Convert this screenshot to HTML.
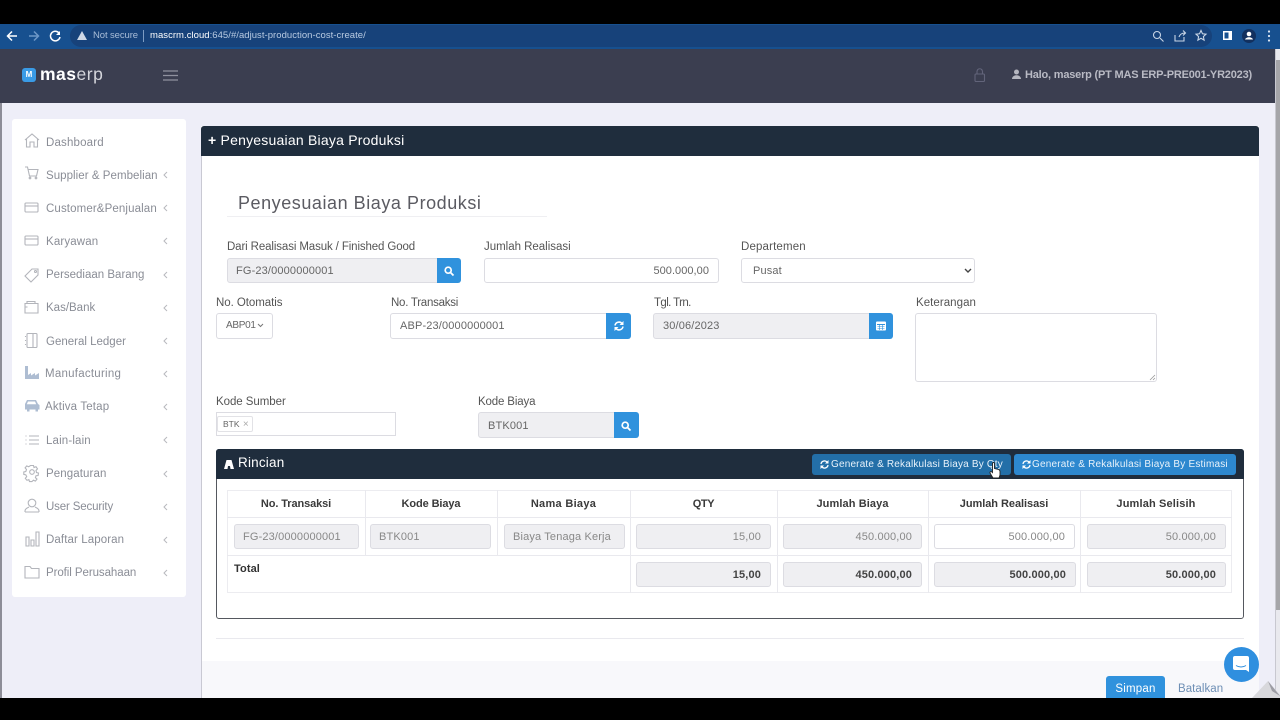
<!DOCTYPE html>
<html><head><meta charset="utf-8"><title>Penyesuaian Biaya Produksi</title>
<style>
*{box-sizing:border-box}
html,body{margin:0;padding:0;width:1280px;height:720px;overflow:hidden;background:#000;font-family:"Liberation Sans",sans-serif;color:#555}
div,span,svg{position:absolute}
.t{white-space:nowrap;font-size:11.5px;line-height:14px;letter-spacing:.1px;color:#555}
.nav{white-space:nowrap;font-size:11.5px;line-height:14px;letter-spacing:.12px;color:#8a8d96;left:46px}
.f{border:1px solid #dcdce2;border-radius:3px;background:#fff;font-size:11px;line-height:14px;letter-spacing:.15px;color:#666;white-space:nowrap}
.d{background:#efeff2}
.f span{top:50%;margin-top:-7px}
.b{background:#3092dd;border-radius:0 3px 3px 0}
.th{font-weight:bold;font-size:11px;line-height:14px;letter-spacing:.05px;color:#3a3a3a;text-align:center;top:497px;white-space:nowrap}
.ln{background:#e9e9ee}
svg{overflow:visible}
.ic{fill:none;stroke:#b3b5bb;stroke-width:1.1}
</style></head><body>

<!-- browser bar -->
<div style="left:0;top:24px;width:1280px;height:25px;background:#17508f"></div>
<div style="left:70px;top:25px;width:1142px;height:22px;background:#17427a;border-radius:11px"></div>
<svg style="left:0;top:24px" width="90" height="25"><path d="M17 12H8M12 7.500L7.500 12l4.500 4.500" fill="none" stroke="#fff" stroke-width="1.500"/><path d="M29 12h9M34 7.500l4.500 4.500-4.500 4.500" fill="none" stroke="#6d97c7" stroke-width="1.500"/><path d="M59 9a4.800 4.800 0 1 0 1 4" fill="none" stroke="#fff" stroke-width="1.500"/><path d="M60 7v4h-4z" fill="#fff"/><path d="M82 7l5 9h-10z" fill="#cfd8e6"/></svg>
<div class="t" style="left:93px;top:29px;font-size:9.500px;color:#a9bdd8;letter-spacing:-.1px">Not secure</div>
<div style="left:143px;top:30px;width:1px;height:12px;background:#7d9cc3"></div>
<div class="t" style="left:150px;top:29px;font-size:9.500px;color:#b9cbe2;letter-spacing:.04px"><b style="color:#fff;font-weight:normal">mascrm.cloud</b>:645/#/adjust-production-cost-create/</div>
<svg style="left:1150px;top:28px" width="125" height="16"><g fill="none" stroke="#c8d5e6" stroke-width="1.100"><circle cx="7" cy="7" r="3.500"/><path d="M10 10l3.500 3.500"/><path d="M25 7v6h9V9M29 9c1-3 3-4 6-4M33 2.500l2.500 2.500-2.500 2.500"/><path d="M51 2.500l1.500 3.300 3.500.4-2.600 2.400.7 3.500-3.100-1.800-3.100 1.800.7-3.500-2.600-2.400 3.500-.4z"/></g><path d="M73 3h9v9h-9z" fill="#fff"/><path d="M74.500 4.500h4v6h-4z" fill="#17508f"/><circle cx="99" cy="8" r="7" fill="#12305e"/><circle cx="99" cy="6" r="2.300" fill="#fff"/><path d="M95 11.500c1-3 7-3 8 0z" fill="#fff"/><circle cx="119" cy="3.500" r="1.100" fill="#dfe8f4"/><circle cx="119" cy="8" r="1.100" fill="#dfe8f4"/><circle cx="119" cy="12.500" r="1.100" fill="#dfe8f4"/></svg>

<!-- page -->
<div style="left:0;top:49px;width:1275px;height:649px;background:#eeeef8;overflow:hidden"></div>
<div style="left:0;top:103px;width:2px;height:595px;background:#8d8d98"></div>
<div style="left:0;top:49px;width:1275px;height:54px;background:#3b3e50"></div>

<!-- logo -->
<div style="left:22px;top:68px;width:14px;height:14px;background:#3a9be6;border-radius:3px;color:#fff;font-size:8px;line-height:14px;text-align:center;font-weight:bold">M</div>
<div class="t" style="left:40px;top:64px;font-size:17.500px;line-height:21px;color:#fff;letter-spacing:.5px"><b>mas</b><span style="position:static;color:#d5d6dc">erp</span></div>
<svg style="left:163px;top:70px" width="16" height="11"><path d="M0 1h15M0 5.500h15M0 10h15" stroke="#8f919e" stroke-width="1.300"/></svg>
<svg style="left:974px;top:68px" width="12" height="14"><rect x="1" y="6" width="9.500" height="7.500" rx="1" fill="none" stroke="#62647a" stroke-width="1.100"/><path d="M3 6V3.500a2.700 2.700 0 0 1 5.500 0V6" fill="none" stroke="#62647a" stroke-width="1.100"/></svg>
<svg style="left:1012px;top:69px" width="10" height="11"><circle cx="4.500" cy="3" r="2.500" fill="#b5b6c0"/><path d="M0 10c0-5 9-5 9 0z" fill="#b5b6c0"/></svg>
<div class="t" style="left:1025px;top:68px;font-weight:bold;font-size:11px;color:#b9bac4;letter-spacing:-.2px">Halo, maserp (PT MAS ERP-PRE001-YR2023)</div>

<!-- sidebar -->
<div style="left:12px;top:119px;width:174px;height:478px;background:#fff;border-radius:3px"></div>
<div class="nav" style="top:136px;letter-spacing:.17px">Dashboard</div>
<div class="nav" style="top:169px;letter-spacing:.05px">Supplier &amp; Pembelian</div>
<div class="nav" style="top:202px;letter-spacing:.12px">Customer&amp;Penjualan</div>
<div class="nav" style="top:235px;letter-spacing:.15px">Karyawan</div>
<div class="nav" style="top:268px;letter-spacing:0">Persediaan Barang</div>
<div class="nav" style="top:301px;letter-spacing:0">Kas/Bank</div>
<div class="nav" style="top:335px;letter-spacing:0">General Ledger</div>
<div class="nav" style="top:367px;left:45px;letter-spacing:.25px">Manufacturing</div>
<div class="nav" style="top:400px;left:45px;letter-spacing:.15px">Aktiva Tetap</div>
<div class="nav" style="top:434px;letter-spacing:.15px">Lain-lain</div>
<div class="nav" style="top:467px;letter-spacing:.1px">Pengaturan</div>
<div class="nav" style="top:500px;letter-spacing:-.15px">User Security</div>
<div class="nav" style="top:533px;letter-spacing:.1px">Daftar Laporan</div>
<div class="nav" style="top:566px;letter-spacing:-.07px">Profil Perusahaan</div>
<svg style="left:162px;top:135px" width="8" height="450"><g fill="none" stroke="#b8b9be" stroke-width="1"><path d="M5 37l-3 3 3 3M5 70l-3 3 3 3M5 103l-3 3 3 3M5 137l-3 3 3 3M5 170l-3 3 3 3M5 203l-3 3 3 3M5 236l-3 3 3 3M5 269l-3 3 3 3M5 302l-3 3 3 3M5 336l-3 3 3 3M5 369l-3 3 3 3M5 402l-3 3 3 3M5 435l-3 3 3 3"/></g></svg>
<svg style="left:24px;top:132px" width="16" height="450"><g class="ic">
<path d="M1 8l7-6 7 6M2.500 7v8h3.500v-5h4v5h3.500V7"/>
<path d="M1 35h2.500l2 9h7l1.500-6.500H4"/><circle cx="6" cy="46" r=".8"/><circle cx="12" cy="46" r=".8"/>
<rect x="1" y="71" width="13" height="9" rx="1"/><path d="M1 74h13"/>
<rect x="1" y="104" width="13" height="9" rx="1"/><path d="M1 107h13"/>
<path d="M1 144l7-7h6v6l-7 7z"/><circle cx="11.500" cy="139.500" r="1"/>
<path d="M1 171.500h13v9.500H1zM3 171.500v-2h8v2M1 175h2.500"/>
<rect x="3" y="201.500" width="10" height="14" rx="1"/><path d="M9 201.500v14M1.500 204v1M1.500 208v1M1.500 212v1"/>
<path d="M5 304h10M5 308h10M5 312h10M1.500 304h1M1.500 308h1M1.500 312h1"/>
<path d="M6.500 333l3 0 .5 2 2-.8 1.500 2.100-1.500 1.700.5 2 2 .5-.4 2.500-2.100.2-.6 2 1.600 1.400-1.600 2-2-.9-1.500 1.400h-2.400l-.6-1.900-2 .6-1.600-2 1.400-1.600-.9-1.900-2-.4v-2.500l2-.4.7-2-1.400-1.600 1.600-2 2 .8z" transform="translate(0,.5) scale(1,1)"/><circle cx="8" cy="340" r="2.300"/>
<circle cx="8" cy="371" r="3.800"/><path d="M1 380v-1c0-2.500 3-3.500 4-4M15 380v-1c0-2.500-3-3.500-4-4M1 380h14"/>
<path d="M2 405h3v9H2zM7 408h3v6H7zM12 400h3v14h-3z"/>
<path d="M1 434.500h5l1.500 2H15v9.500H1z"/></g>
<path d="M1 234v13h14v-6l-4 2.500v-2.500l-4 2.500v-2.500l-3 2v-9z" fill="#aebdd2"/>
<path d="M3 268h9l2 4 1.500 1v4.500h-1.500v2h-2.500v-2h-6v2H3v-2H1v-4.500l0-1zM4 269.500l-1.200 2.800h9.400L11 269.500z" fill-rule="evenodd" fill="#aebdd2"/></svg>

<!-- main panel -->
<div style="left:201px;top:126px;width:1058px;height:572px;background:#fff"></div>
<div style="left:201px;top:126px;width:1058px;height:30px;background:#1f2d3d;border-radius:3px 3px 0 0"></div>
<div class="t" style="left:208px;top:132px;font-size:14px;line-height:17px;color:#fff;letter-spacing:.22px"><b>+</b> Penyesuaian Biaya Produksi</div>
<div style="left:201px;top:156px;width:1px;height:542px;background:#c9c9d3"></div>
<div class="t" style="left:238px;top:192px;font-size:18px;line-height:22px;color:#5b5b62;letter-spacing:.55px">Penyesuaian Biaya Produksi</div>
<div class="ln" style="left:227px;top:216px;width:320px;height:1px;background:#efeff2"></div>

<!-- row 1 -->
<div class="t" style="left:227px;top:240px;letter-spacing:-.12px">Dari Realisasi Masuk / Finished Good</div>
<div class="f d" style="left:227px;top:258px;width:211px;height:25px;border-radius:3px 0 0 3px"><span style="left:8px">FG-23/0000000001</span></div>
<div class="b" style="left:437px;top:258px;width:24px;height:25px"></div>
<svg style="left:444px;top:266px" width="10" height="10"><circle cx="4.200" cy="4.200" r="3" fill="none" stroke="#fff" stroke-width="1.700"/><path d="M6.500 6.500l3 3" stroke="#fff" stroke-width="1.800"/></svg>
<div class="t" style="left:484px;top:240px;letter-spacing:-.02px">Jumlah Realisasi</div>
<div class="f" style="left:484px;top:258px;width:235px;height:25px"><span style="right:9px;letter-spacing:.05px">500.000,00</span></div>
<div class="t" style="left:741px;top:240px;letter-spacing:.15px">Departemen</div>
<div class="f" style="left:741px;top:258px;width:234px;height:25px"><span style="left:11px">Pusat</span></div>
<svg style="left:964px;top:268px" width="8" height="6"><path d="M1 1l3 3 3-3" fill="none" stroke="#444" stroke-width="1.400"/></svg>

<!-- row 2 -->
<div class="t" style="left:216px;top:296px;letter-spacing:-.05px">No. Otomatis</div>
<div class="f" style="left:216px;top:313px;width:57px;height:26px"><span style="left:9px;font-size:10px;letter-spacing:-.3px">ABP01</span></div>
<svg style="left:257px;top:323px" width="7" height="5"><path d="M1 1l2.500 2.500L6 1" fill="none" stroke="#777"/></svg>
<div class="t" style="left:391px;top:296px;letter-spacing:-.25px">No. Transaksi</div>
<div class="f" style="left:390px;top:313px;width:217px;height:26px;border-radius:3px 0 0 3px"><span style="left:9px">ABP-23/0000000001</span></div>
<div class="b" style="left:606px;top:313px;width:25px;height:26px"></div>
<svg style="left:614px;top:321px" width="10" height="10"><path d="M1 4.500a4 4 0 0 1 7-2M9 5.500a4 4 0 0 1-7 2" fill="none" stroke="#fff" stroke-width="1.500"/><path d="M9.500 0v4h-4zM.5 10V6h4z" fill="#fff"/></svg>
<div class="t" style="left:654px;top:296px;letter-spacing:-.6px">Tgl. Trn.</div>
<div class="f d" style="left:653px;top:313px;width:217px;height:26px;border-radius:3px 0 0 3px"><span style="left:9px">30/06/2023</span></div>
<div class="b" style="left:869px;top:313px;width:24px;height:26px"></div>
<svg style="left:876px;top:320px" width="10" height="11"><rect x="0" y="1.500" width="10" height="9" rx="1" fill="#fff"/><path d="M1 4.500h8" stroke="#3092dd"/><path d="M1.500 6.500h7M1.500 8.500h7M3.500 5v5M6.500 5v5" stroke="#3092dd" stroke-width=".6"/></svg>
<div class="t" style="left:916px;top:296px;letter-spacing:.05px">Keterangan</div>
<div class="f" style="left:915px;top:313px;width:242px;height:69px"></div>
<svg style="left:1149px;top:374px" width="7" height="7"><path d="M1 6l5-5M4 6l2-2" stroke="#999" stroke-width=".8"/></svg>

<!-- row 3 -->
<div class="t" style="left:216px;top:395px;letter-spacing:-.05px">Kode Sumber</div>
<div style="left:216px;top:412px;width:180px;height:24px;border:1px solid #dcdce2"></div>
<div style="left:217px;top:416px;width:36px;height:16px;border:1px solid #e2e2e6;border-radius:2px;font-size:8.500px;line-height:14px;color:#666;padding-left:5px;white-space:nowrap">BTK <span style="position:static;color:#aaa;font-size:10px;margin-left:1px">×</span></div>
<div class="t" style="left:478px;top:395px;letter-spacing:-.15px">Kode Biaya</div>
<div class="f d" style="left:478px;top:412px;width:137px;height:26px;border-radius:3px 0 0 3px"><span style="left:9px;margin-top:-6px">BTK001</span></div>
<div class="b" style="left:614px;top:412px;width:25px;height:26px"></div>
<svg style="left:621px;top:421px" width="10" height="10"><circle cx="4.200" cy="4.200" r="3" fill="none" stroke="#fff" stroke-width="1.700"/><path d="M6.500 6.500l3 3" stroke="#fff" stroke-width="1.800"/></svg>

<!-- rincian -->
<div style="left:216px;top:449px;width:1028px;height:170px;border:1px solid #55585f;border-radius:3px"></div>
<div style="left:216px;top:449px;width:1028px;height:30px;background:#1f2d3d;border-radius:3px 3px 0 0"></div>
<svg style="left:224px;top:460px" width="10" height="9"><path d="M2.500 0h5L10 9H6.500L6 6H4l-.5 3H0z" fill="#fff"/></svg>
<div class="t" style="left:238px;top:455px;font-size:13.500px;line-height:16px;color:#fff;letter-spacing:.2px">Rincian</div>
<div style="left:812px;top:454px;width:199px;height:21px;background:#236fa8;border-radius:3px"></div>
<div style="left:1014px;top:454px;width:222px;height:21px;background:#2d88cf;border-radius:3px"></div>
<svg style="left:820px;top:460px" width="9" height="9"><path d="M1 4a3.500 3.500 0 0 1 6-2M8 5a3.500 3.500 0 0 1-6 2" fill="none" stroke="#fff" stroke-width="1.300"/><path d="M8.500 0v3.500H5zM.5 9V5.500H4z" fill="#fff"/></svg>
<div class="t" style="left:831px;top:459px;font-size:10px;line-height:12px;color:#e8f2fa;letter-spacing:.18px">Generate &amp; Rekalkulasi Biaya By Qty</div>
<svg style="left:1022px;top:460px" width="9" height="9"><path d="M1 4a3.500 3.500 0 0 1 6-2M8 5a3.500 3.500 0 0 1-6 2" fill="none" stroke="#fff" stroke-width="1.300"/><path d="M8.500 0v3.500H5zM.5 9V5.500H4z" fill="#fff"/></svg>
<div class="t" style="left:1032px;top:459px;font-size:10px;line-height:12px;color:#e8f2fa;letter-spacing:.2px">Generate &amp; Rekalkulasi Biaya By Estimasi</div>
<svg style="left:989px;top:462px" width="12" height="17"><path d="M3.500 1.500a1 1 0 0 1 2 0v5l4 1c1 .3 1.500 1 1.500 2V13l-1 3H4l-3-5c-.5-1 1-2 2.500-.5z" fill="#fff" stroke="#222" stroke-width=".9"/></svg>

<!-- table -->
<div style="left:227px;top:490px;width:1005px;height:103px;border:1px solid #ececf0"></div>
<div class="ln" style="left:227px;top:517px;width:1005px;height:1px"></div>
<div class="ln" style="left:227px;top:555px;width:1005px;height:1px"></div>
<div class="ln" style="left:365px;top:490px;width:1px;height:65px"></div>
<div class="ln" style="left:497px;top:490px;width:1px;height:65px"></div>
<div class="ln" style="left:630px;top:490px;width:1px;height:103px"></div>
<div class="ln" style="left:777px;top:490px;width:1px;height:103px"></div>
<div class="ln" style="left:928px;top:490px;width:1px;height:103px"></div>
<div class="ln" style="left:1080px;top:490px;width:1px;height:103px"></div>
<div class="th" style="left:227px;width:138px;letter-spacing:-.1px">No. Transaksi</div>
<div class="th" style="left:365px;width:132px;letter-spacing:-.1px">Kode Biaya</div>
<div class="th" style="left:497px;width:133px;letter-spacing:.3px">Nama Biaya</div>
<div class="th" style="left:630px;width:147px;letter-spacing:-.4px">QTY</div>
<div class="th" style="left:777px;width:151px;letter-spacing:.1px">Jumlah Biaya</div>
<div class="th" style="left:928px;width:152px;letter-spacing:-.05px">Jumlah Realisasi</div>
<div class="th" style="left:1080px;width:152px;letter-spacing:.15px">Jumlah Selisih</div>

<div class="f d" style="left:234px;top:524px;width:125px;height:25px;color:#888"><span style="left:8px">FG-23/0000000001</span></div>
<div class="f d" style="left:370px;top:524px;width:121px;height:25px;color:#888"><span style="left:8px">BTK001</span></div>
<div class="f d" style="left:504px;top:524px;width:121px;height:25px;color:#888"><span style="left:8px">Biaya Tenaga Kerja</span></div>
<div class="f d" style="left:636px;top:524px;width:135px;height:25px;color:#888"><span style="right:9px">15,00</span></div>
<div class="f d" style="left:783px;top:524px;width:139px;height:25px;color:#888"><span style="right:9px">450.000,00</span></div>
<div class="f" style="left:934px;top:524px;width:141px;height:25px;color:#888"><span style="right:9px">500.000,00</span></div>
<div class="f d" style="left:1087px;top:524px;width:139px;height:25px;color:#888"><span style="right:9px">50.000,00</span></div>

<div class="t" style="left:234px;top:562px;font-weight:bold;font-size:11px;color:#333">Total</div>
<div class="f d" style="left:636px;top:562px;width:135px;height:25px;font-weight:bold;color:#444"><span style="right:9px">15,00</span></div>
<div class="f d" style="left:783px;top:562px;width:139px;height:25px;font-weight:bold;color:#444"><span style="right:9px">450.000,00</span></div>
<div class="f d" style="left:934px;top:562px;width:142px;height:25px;font-weight:bold;color:#444"><span style="right:9px">500.000,00</span></div>
<div class="f d" style="left:1087px;top:562px;width:139px;height:25px;font-weight:bold;color:#444"><span style="right:9px">50.000,00</span></div>

<div class="ln" style="left:216px;top:638px;width:1028px;height:1px"></div>
<div style="left:202px;top:661px;width:1057px;height:37px;background:#f8f8fb"></div>
<div style="left:1106px;top:676px;width:59px;height:22px;background:#3092dd;border-radius:3px 3px 0 0;color:#fff;font-size:11.500px;line-height:26px;text-align:center;letter-spacing:.2px">Simpan</div>
<div class="t" style="left:1178px;top:682px;color:#6e8fb5;letter-spacing:.05px">Batalkan</div>

<!-- scrollbar -->
<div style="left:1275px;top:49px;width:5px;height:649px;background:#e9e9ee"></div>
<div style="left:1275px;top:60px;width:5px;height:550px;background:#a5a5a9"></div>
<div style="left:1275px;top:49px;width:1px;height:649px;background:#c8c8d0"></div>

<!-- chat -->
<div style="left:1224px;top:647px;width:35px;height:35px;background:#2f8fdf;border-radius:50%"></div>
<svg style="left:1233px;top:656px" width="17" height="17"><path d="M2 0h12a2 2 0 0 1 2 2v14l-3-2H2a2 2 0 0 1-2-2V2a2 2 0 0 1 2-2z" fill="#fff"/><path d="M3 9.500c3 2 7 2 10 0" fill="none" stroke="#2f8fdf" stroke-width="1"/></svg>
<svg style="left:1250px;top:680px" width="30" height="18"><path d="M2 18L18 1l12 14v3z" fill="#d8d8dc"/><path d="M18 1l4 10 8 5z" fill="#9c9ca4"/></svg>

</body></html>
